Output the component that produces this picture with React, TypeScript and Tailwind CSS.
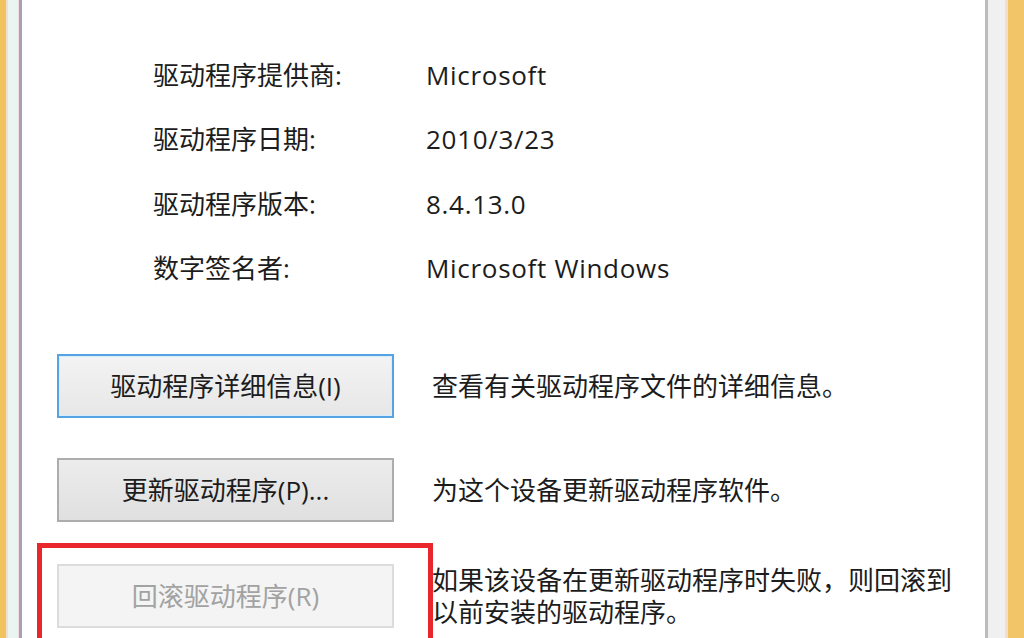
import React from "react";

const font = {
  fontFamily: '"Open Sans", "Noto Sans CJK SC", "Noto Sans", sans-serif',
};

const details = [
  { label: "驱动程序提供商:", value: "Microsoft" },
  { label: "驱动程序日期:", value: "2010/3/23" },
  { label: "驱动程序版本:", value: "8.4.13.0" },
  { label: "数字签名者:", value: "Microsoft Windows" },
];

export default function App() {
  return (
    <div
      className="flex h-[638px] w-[1024px] overflow-hidden bg-white text-[26px] text-[#1c1c1c]"
      style={font}
    >
      {/* left window frame */}
      <div className="flex h-full shrink-0">
        <div className="w-[6px] bg-[#f0c35c]" />
        <div className="w-[2px] bg-[#f6ddd2]" />
        <div className="w-[10px] bg-[#eaf5f2]" />
        <div className="w-[1px] bg-[#f2dbe2]" />
        <div className="w-[3px] bg-[#a7a0b7]" />
      </div>

      {/* dialog body */}
      <div className="relative flex-1 pt-[43px]">
        <div className="grid grid-cols-[273px_1fr] pl-[131px]">
          {details.map((d) => (
            <React.Fragment key={d.label}>
              <div className="flex h-[64.5px] items-center">{d.label}</div>
              <div className="flex h-[64.5px] items-center tracking-[0.7px]">{d.value}</div>
            </React.Fragment>
          ))}
        </div>

        <div className="mt-[53px] flex flex-col pl-[35px]">
          <div className="flex items-center">
            <button className="h-[64px] w-[337px] shrink-0 border-2 border-[#56a3e3] bg-gradient-to-b from-[#f3f3f3] to-[#e7e7e7] text-[#1c1c1c] shadow-[inset_0_0_0_1px_#d8ecfb]">
              驱动程序详细信息(I)
            </button>
            <p className="ml-[38px] leading-[32px]">查看有关驱动程序文件的详细信息。</p>
          </div>
          <div className="mt-[40px] flex items-center">
            <button className="h-[64px] w-[337px] shrink-0 border-2 border-[#adadad] bg-gradient-to-b from-[#ececec] to-[#e0e0e0] text-[#1c1c1c]">
              更新驱动程序(P)...
            </button>
            <p className="ml-[38px] leading-[32px]">为这个设备更新驱动程序软件。</p>
          </div>
          <div className="mt-[42px] flex items-center">
            <button
              disabled
              className="h-[64px] w-[337px] shrink-0 border-2 border-[#dcdcdc] bg-[#f4f4f4] text-[#a2a2a2]"
            >
              回滚驱动程序(R)
            </button>
            <p className="ml-[38px] whitespace-nowrap leading-[32px]">
              如果该设备在更新驱动程序时失败，则回滚到
              <br />
              以前安装的驱动程序。
            </p>
          </div>
        </div>

        {/* red annotation box */}
        <div className="absolute left-[15px] top-[543px] h-[140px] w-[396px] border-[5px] border-[#e8262b]" />
      </div>

      {/* right window frame */}
      <div className="flex h-full shrink-0">
        <div className="w-[3px] bg-[#bcbcbc]" />
        <div className="w-[17px] bg-[#f0f0f0]" />
        <div className="w-[3px] bg-[#f6dccb]" />
        <div className="w-[16px] bg-[#f2c668]" />
      </div>
    </div>
  );
}
